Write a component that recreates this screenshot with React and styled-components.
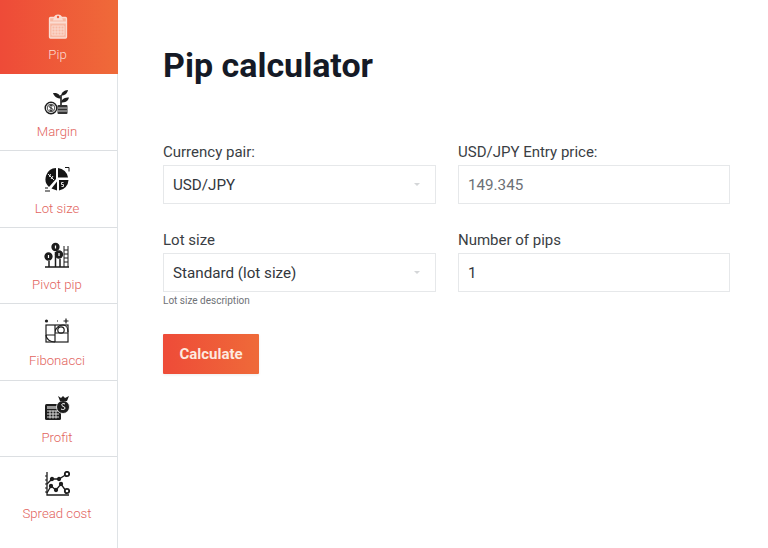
import React from "react";
import styled, { createGlobalStyle } from "styled-components";

const Global = createGlobalStyle`
  html, body { margin: 0; padding: 0; background: #fff; }
  body { font-family: Roboto, "Liberation Sans", sans-serif; overflow: hidden; }
  * { box-sizing: border-box; }
`;
const Page = styled.div`display: flex; width: 768px; height: 548px; background: #fff;`;
const Sidebar = styled.nav`
  width: 118px; height: 548px; flex: none; border-right: 1px solid #dfe3e6;
  display: flex; flex-direction: column;
`;
const NavItem = styled.div`
  height: ${p => p.$h}px; flex: none; display: flex; flex-direction: column; align-items: center;
  padding: ${p => p.$pt}px 3px 0 0; gap: ${p => p.$active ? 8 : 9}px;
  background: ${p => p.$active ? "linear-gradient(90deg, #ee4b38, #ef6a39)" : "transparent"};
  color: ${p => p.$active ? "#fbdcd2" : "#e2645e"};
  border-bottom: ${p => p.$last || p.$active ? "none" : "1px solid #dcdfe2"};
  margin-right: ${p => p.$active ? "-1px" : "0"};
  font-size: 13.2px; font-weight: 300; line-height: 16px;
  svg { display: block; width: 26px; height: 26px; }
`;
const Main = styled.main`flex: 1; padding: 44px 38px 0 45px;`;
const Title = styled.h1`
  margin: 0 0 57px; font-size: 34px; line-height: 42px; font-weight: 700; color: #151a26;
`;
const Form = styled.div`display: grid; grid-template-columns: 273px 272px; column-gap: 22px; row-gap: 27px;`;
const Field = styled.div`display: flex; flex-direction: column; position: relative;`;
const Label = styled.label`font-size: 15px; line-height: 18px; color: #3a3e44; margin-bottom: 4px;`;
const Control = styled.div`
  height: 39px; border: 1px solid #e6e8ea; display: flex; align-items: center; justify-content: space-between;
  padding: 0 15px 0 9px; font-size: 15.2px; color: ${p => p.$muted ? "#6c7075" : "#33373d"};
`;
const Caret = styled.span`
  width: 0; height: 0; border-left: 3.5px solid transparent; border-right: 3.5px solid transparent;
  border-top: 3.5px solid #d4d6d8;
`;
const Hint = styled.div`
  position: absolute; top: 100%; left: 0; margin-top: 3px; font-size: 10px; line-height: 12px; color: #6f7276;
`;
const Button = styled.button`
  margin-top: 42px; width: 96px; height: 40px; border: none; border-radius: 1px; color: #fde9df;
  background: linear-gradient(90deg, #ee4b38, #ef6a39); font: 700 15px Roboto, sans-serif; padding: 0;
  box-shadow: 0 1px 3px rgba(0,0,0,.08);
`;

const Pip = () => (
  <svg viewBox="0 0 26 26" fill="none" stroke="#fbdcd2" strokeWidth="1.3">
    <rect x="4.500" y="4.500" width="17" height="20.500" rx="1" fill="#f8b9a4" />
    <path d="M9 4.500c0-4 8-4 8 0l1 3H8z" fill="#fbdcd2" stroke="none" />
    <circle cx="13" cy="4" r="1.200" fill="#f06040" stroke="none" />
    <path d="M5 9.500h16" strokeWidth="2" />
    <path d="M7 13h12v9H7zM7 16h12M7 19h12M10 13v9M13 13v9M16 13v9" strokeWidth=".9" />
  </svg>
);
const Margin = () => (
  <svg viewBox="0 0 26 26" fill="none" stroke="#1d1d1d" strokeWidth="1.400">
    <circle cx="7" cy="19" r="5.800" />
    <circle cx="7" cy="19" r="3.800" strokeWidth=".8" />
    <path d="M7 15.500v7M8.800 17c-1-1-3.600-.8-3.600.7s3.600 1 3.600 2.700-2.800 1.200-3.600.4" strokeWidth=".9" />
    <path d="M17 16V6" strokeWidth="1.600" />
    <path d="M17 9.500C16 5 13 3.500 9 4c1.500 4 4 5.500 8 5.500zM17 6.500C18 3 20 1.500 24 1c-1 4-3 5.500-7 5.500zM17 13.500c1-4 4-5 8-5-1 4-3.500 5-8 5z" fill="#1d1d1d" stroke="none" />
    <rect x="13.500" y="16" width="10" height="9" rx="1" fill="#333" stroke="none" />
    <path d="M14 19h9M14 22h9" strokeWidth="1" stroke="#ccc" />
  </svg>
);
const LotSize = () => (
  <svg viewBox="0 0 26 26" fill="#151515" stroke="none">
    <path d="M12 2A11 11 0 0 0 5 21L12 13z" />
    <path d="M14 2A11 11 0 0 1 24 11.500H14z" />
    <path d="M15 14H24.500A11 11 0 0 1 15 24.500z" />
    <path d="M7.500 22.500L13 15.500V24.500z" />
    <path d="M4 8l6 6M5.500 11l1-3M7 13l2-3" stroke="#e8e8e8" strokeWidth="1" fill="none" />
    <path d="M19.500 16.500h-2v2h2v2h-2" stroke="#ddd" strokeWidth="1" fill="none" />
    <path d="M1 25h5M1 22h3" stroke="#151515" strokeWidth="1.200" />
    <path d="M21 1.500h4v4" stroke="#151515" strokeWidth="1" fill="none" />
  </svg>
);
const Pivot = () => (
  <svg viewBox="0 0 26 26" fill="#1d1d1d" stroke="#1d1d1d" strokeWidth="1.500">
    <circle cx="4.500" cy="14.500" r="3.400" /><circle cx="11.500" cy="5" r="3.400" /><circle cx="15" cy="12.500" r="3.400" />
    <path d="M4.500 13v3M11.500 3.500v3M15 11v3" stroke="#fff" strokeWidth="1.200" />
    <path d="M5 19v6M11.500 10v15M16 17v8M1 25h24" fill="none" />
    <path d="M20 25V4M24 25V4M20 8h4M20 12h4M20 16h4M20 20h4" strokeWidth="1" fill="none" />
  </svg>
);
const Fibonacci = () => (
  <svg viewBox="0 0 26 26" fill="none" stroke="#1d1d1d" strokeWidth="1.200">
    <rect x="2" y="7" width="22" height="17" />
    <path d="M2 17h9v7M11 17V7M11 15h13M2 17c0 4 4 7 9 7M11 15c0-5 4-8 8-8 3 0 5 3 5 7" />
    <circle cx="17" cy="12" r="3.200" />
    <circle cx="2.500" cy="3" r="1.600" fill="#1d1d1d" stroke="none" />
    <path d="M19.500 3h5M22 .5v5M13 3h1" />
  </svg>
);
const Profit = () => (
  <svg viewBox="0 0 26 26" fill="none" stroke="#1d1d1d">
    <rect x="1" y="9" width="16" height="16" rx="1.500" fill="#1d1d1d" stroke="none" />
    <rect x="3" y="11" width="12" height="3" fill="#999" stroke="none" />
    <path d="M3 16h12M3 19h12M3 22h12M6 15.500v8M9 15.500v8M12 15.500v8" stroke="#ddd" strokeWidth="1" />
    <circle cx="19" cy="12" r="6.500" fill="#1d1d1d" stroke="#fff" strokeWidth=".8" />
    <path d="M14 1l3 2 2-2 2 2 4-2-2 5h-7z" fill="#1d1d1d" stroke="none" />
    <path d="M21 9c-2-1-4 0-3 1.500s3 1 3 2.500-2 2-4 1" stroke="#fff" strokeWidth="1" />
  </svg>
);
const Spread = () => (
  <svg viewBox="0 0 26 26" fill="none" stroke="#1d1d1d" strokeWidth="1.300">
    <path d="M3 1v23h22" />
    <path d="M1 5h2M1 9h2M1 13h2M1 17h2M1 21h2" strokeWidth="1" />
    <path d="M3 13l5-5 7 0 8-5M3 22l4-7 5 4 5-6 5 7" />
    <circle cx="8" cy="8" r="1.500" fill="#1d1d1d" /><circle cx="15" cy="8" r="1.500" fill="#1d1d1d" />
    <circle cx="23" cy="3" r="2.200" fill="#fff" strokeWidth="1.800" /><circle cx="7" cy="15" r="1.500" fill="#1d1d1d" />
    <circle cx="12" cy="19" r="1.500" fill="#1d1d1d" /><circle cx="17" cy="13" r="1.500" fill="#1d1d1d" />
    <circle cx="23" cy="20" r="2.200" fill="#fff" strokeWidth="1.800" />
  </svg>
);

const items = [
  ["Pip", Pip, 74, 13], ["Margin", Margin, 77, 15], ["Lot size", LotSize, 77, 15], ["Pivot pip", Pivot, 76, 14],
  ["Fibonacci", Fibonacci, 77, 14], ["Profit", Profit, 76, 14], ["Spread cost", Spread, 91, 14],
];

export default function App() {
  return (
    <Page>
      <Global />
      <Sidebar>
        {items.map(([name, Icon, h, pt], i) => (
          <NavItem key={name} $h={h} $pt={pt} $active={i === 0} $last={i === items.length - 1}>
            <Icon />
            <span>{name}</span>
          </NavItem>
        ))}
      </Sidebar>
      <Main>
        <Title>Pip calculator</Title>
        <Form>
          <Field><Label>Currency pair:</Label><Control>USD/JPY<Caret /></Control></Field>
          <Field><Label>USD/JPY Entry price:</Label><Control $muted>149.345</Control></Field>
          <Field><Label>Lot size</Label><Control>Standard (lot size)<Caret /></Control><Hint>Lot size description</Hint></Field>
          <Field><Label>Number of pips</Label><Control>1</Control></Field>
        </Form>
        <Button>Calculate</Button>
      </Main>
    </Page>
  );
}
